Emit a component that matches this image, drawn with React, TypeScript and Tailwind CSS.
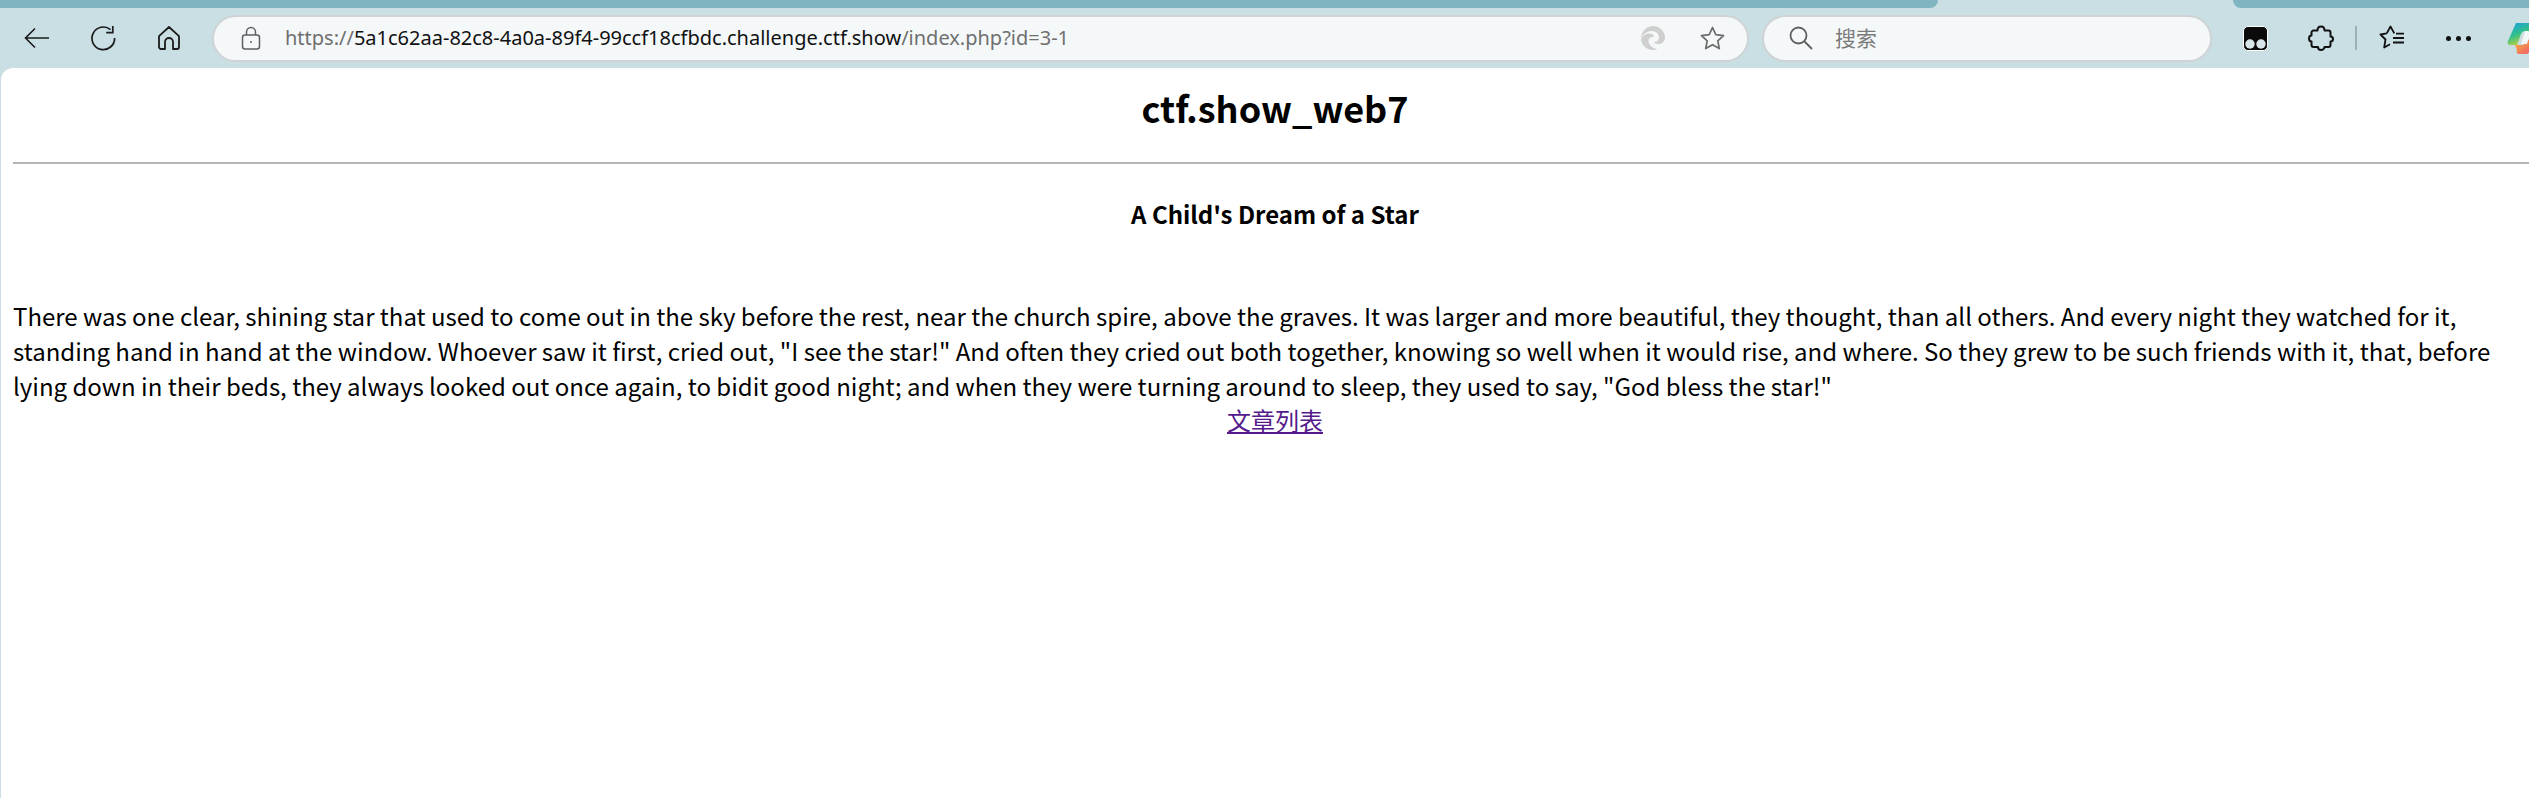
import React from 'react';

const Toolbar: React.FC = () => (
  <div className="flex h-[60px] items-center">
    <div className="flex w-[212px] shrink-0 items-center">
      <svg className="ml-[24px] h-[26px] w-[26px]" viewBox="0 0 26 26" fill="none" stroke="#1b1b1b" strokeWidth="1.6">
        <path d="M1.5 13H25M11 3.5L1.5 13l9.5 9.5" />
      </svg>
      <svg className="ml-[40px] h-[26px] w-[26px]" viewBox="0 0 26 26" fill="none" stroke="#1b1b1b" strokeWidth="1.7">
        <path d="M20.5 4.6A11.3 11.3 0 1 0 24.6 13" />
        <path d="M22.8 1v6.6h-6.6" />
      </svg>
      <svg className="ml-[40px] h-[26px] w-[26px]" viewBox="0 0 26 26" fill="none" stroke="#1b1b1b" strokeWidth="1.8" strokeLinejoin="round">
        <path d="M3 11.2L13 2l10 9.2V22a2 2 0 0 1-2 2h-4v-7a4 4 0 0 0-8 0v7H5a2 2 0 0 1-2-2z" />
      </svg>
    </div>

    <div className="flex h-[47px] w-[1537px] shrink-0 items-center rounded-full border-2 border-[#d0d3d5] bg-[#f5f8f9]">
      <svg className="ml-[27px] h-[24px] w-[20px]" viewBox="0 0 20 24" fill="none" stroke="#5f5f5f" strokeWidth="1.5">
        <path d="M5.5 9V6a4.5 4.5 0 0 1 9 0v3" />
        <rect x="1.5" y="9" width="17" height="14" rx="2.5" />
        <circle cx="10" cy="16" r="1" fill="#5f5f5f" stroke="none" />
      </svg>
      <div className="ml-[24px] text-[20px] text-[#6f6f6f] [font-family:'Noto_Sans',sans-serif]">
        https://<span className="text-[#111]">5a1c62aa-82c8-4a0a-89f4-99ccf18cfbdc.challenge.ctf.show</span>/index.php?id=3-1
      </div>
      <svg className="ml-auto h-[24px] w-[24px]" viewBox="0 0 24 24" fill="#cfcfcf">
        <path d="M12 0a12 12 0 0 1 12 11.500c0 4-3 6.500-6.500 6.500-2.500 0-4-1-4.500-2 3 0 5-1.800 5-4.500C18 7.500 14.500 4.500 10 5 5 5.500 1.500 9 0 13 0 5.500 5.500 0 12 0z" />
        <path d="M0 14c1-3.500 4-6.500 8-6.500 3 0 5 1.500 5 3.500-3-.5-5.500 1-5.500 4 0 3.500 4 7.500 9 8A12 12 0 0 1 0 14z" />
      </svg>
      <svg className="ml-[35px] mr-[22px] h-[25px] w-[25px]" viewBox="0 0 25 25" fill="none" stroke="#6b6b6b" strokeWidth="1.7" strokeLinejoin="round">
        <path d="M12.500 1.500l3.300 7.200 7.700.9-5.700 5.300 1.500 7.700-6.800-3.900-6.800 3.900 1.500-7.700-5.700-5.300 7.700-.9z" />
      </svg>
    </div>

    <div className="ml-[13px] flex h-[47px] w-[450px] shrink-0 items-center rounded-full border-2 border-[#d0d3d5] bg-[#f5f8f9]">
      <svg className="ml-[25px] h-[24px] w-[24px]" viewBox="0 0 24 24" fill="none" stroke="#5f5f5f" strokeWidth="1.8">
        <circle cx="9.500" cy="9.500" r="8" />
        <path d="M15.500 15.500L23 23" />
      </svg>
      <span className="ml-[22px] text-[21px] text-[#7a7a7a] [font-family:'Noto_Sans_CJK_SC',sans-serif]">搜索</span>
    </div>

    <div className="relative flex min-w-0 flex-1 items-center">
      <svg className="ml-[31px] h-[25px] w-[25px] shrink-0" viewBox="0 0 25 25">
        <rect x="0.500" y="0.500" width="24" height="24" rx="4.500" fill="#0b0b0b" stroke="#fff" />
        <circle cx="7" cy="18" r="4.700" fill="#d9e6e9" />
        <circle cx="18" cy="18" r="4.700" fill="#d9e6e9" />
      </svg>
      <svg className="ml-[40px] h-[26px] w-[26px] shrink-0" viewBox="0 0 26 26" fill="none" stroke="#111" strokeWidth="2" strokeLinejoin="round">
        <path d="M9.500 5.500C9.500 3 11 1.500 13 1.500s3.500 1.500 3.500 4h4a2 2 0 0 1 2 2v4c2 0 2.500 1 2.500 2.500s-1 2.500-2.500 2.500v3.500a2 2 0 0 1-2 2h-4c0 1.500-1.500 3-3.500 3s-3-1.500-3-3H5.500a2 2 0 0 1-2-2v-3.500C2 16.500 1 15.200 1 13.500s1-3 2.500-3v-3a2 2 0 0 1 2-2z" />
      </svg>
      <div className="ml-[21px] h-[24px] w-[2px] shrink-0 bg-[#9fb0b5]" />
      <svg className="ml-[22px] h-[26px] w-[26px] shrink-0" viewBox="0 0 26 26" fill="none" stroke="#111" strokeWidth="1.8" strokeLinejoin="round">
        <path d="M7.700 8.400l3.800-6.900 3.800 6.900M7.700 8.400L1.500 9.500l5 5-1.300 8 5.800-3.200" />
        <path d="M14 13h11M14 17.500h11M17 8.700h8" />
      </svg>
      <div className="ml-[41px] flex shrink-0 gap-[5px]">
        <div className="h-[5px] w-[5px] rounded-full bg-[#111]" />
        <div className="h-[5px] w-[5px] rounded-full bg-[#111]" />
        <div className="h-[5px] w-[5px] rounded-full bg-[#111]" />
      </div>
      {/* copilot logo, cut off by the window edge */}
      <svg className="absolute left-[295px] top-[-2px] h-[31px] w-[32px]" viewBox="0 0 32 31">
        <defs>
          <linearGradient id="cpA" x1="0" y1="0" x2="0.6" y2="1">
            <stop offset="0" stopColor="#1c9be8" />
            <stop offset="0.5" stopColor="#2fc08a" />
            <stop offset="1" stopColor="#e8d52a" />
          </linearGradient>
          <linearGradient id="cpB" x1="0" y1="0" x2="1" y2="1">
            <stop offset="0" stopColor="#f6b73c" />
            <stop offset="1" stopColor="#f0566e" />
          </linearGradient>
        </defs>
        <path d="M9 0h23v8H18c-3 0-4 3-5 6l-3 8H3c-2 0-3-2-2-4z" fill="url(#cpA)" />
        <path d="M8 22h8l4-6 6 2-2 8c-1 3-3 5-6 5H12c-2 0-3-2-2-4z" fill="url(#cpB)" />
        <path d="M22 0h10v16h-8l3-10z" fill="#2a4bd8" />
        <path d="M18 8h6l-4 13h-6z" fill="#f3f6f7" />
      </svg>
    </div>
  </div>
);

const App: React.FC = () => {
  return (
    <div className="h-[798px] w-[2529px] overflow-hidden bg-[#c9dfe3]">
      <div className="flex h-[8px]">
        <div className="w-[1938px] rounded-br-[8px] bg-[#7fb5c0]" />
        <div className="ml-[295px] flex-1 rounded-bl-[8px] bg-[#7fb5c0]" />
      </div>
      <Toolbar />
      <div className="ml-[1px] h-[730px] w-[2536px] rounded-tl-[12px] bg-white pl-[12px] pt-[13px] text-[24px] leading-[34.75px] text-black [font-family:'Noto_Sans_CJK_SC','Noto_Sans',sans-serif]">
        <h2 className="text-center text-[36px] font-bold leading-[52px]">ctf.show_web7</h2>
        <hr className="mt-[29px] border-t-2 border-[#b4b4b4]" />
        <h3 className="mt-[32px] text-center text-[24px] font-bold leading-[35px]">A Child's Dream of a Star</h3>
        <p className="mt-[68px]">
          There was one clear, shining star that used to come out in the sky before the rest, near the church spire, above the graves. It was larger and more beautiful, they thought, than all others. And every night they watched for it, standing hand in hand at the window. Whoever saw it first, cried out, "I see the star!" And often they cried out both together, knowing so well when it would rise, and where. So they grew to be such friends with it, that, before lying down in their beds, they always looked out once again, to bidit good night; and when they were turning around to sleep, they used to say, "God bless the star!"
        </p>
        <div className="text-center">
          <a href="#" className="text-[#551a8b] underline">文章列表</a>
        </div>
      </div>
    </div>
  );
};

export default App;
